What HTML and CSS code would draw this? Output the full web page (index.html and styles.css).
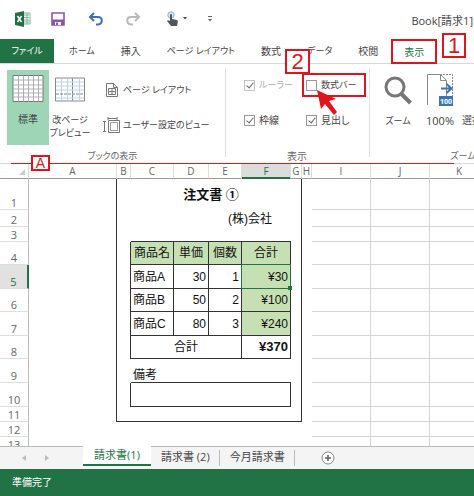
FILE: index.html
```html
<!DOCTYPE html>
<html lang="ja">
<head>
<meta charset="utf-8">
<title>Book[請求1]</title>
<link rel="stylesheet" href="styles.css">
</head>
<body>
<div class="app">
  <header class="titlebar">
    <div class="quick">
      <svg class="q-excel" width="16" height="16" viewBox="0 0 16 16"><path d="M8 2h7v11H8z" fill="#fff" stroke="#7fb497"/><path d="M9 4h5M9 6.500h5M9 9h5M9 11h5M12 2v11" stroke="#7fb497"/><path d="M0 2l9-2v16l-9-2z" fill="#1e7145"/><path d="M2.500 5l4 6M6.500 5l-4 6" stroke="#fff" stroke-width="1.500"/></svg>
      <button class="q-save" aria-label="上書き保存"><svg width="14" height="14" viewBox="0 0 14 14"><path d="M1 1h12v12H1z" fill="#fff" stroke="#8a55b0" stroke-width="1.600"/><path d="M1 7.500h12V13H1z" fill="#8a55b0"/><path d="M4 10h6v3H4z" fill="#fff"/><path d="M5 10.500h2V13H5z" fill="#8a55b0"/></svg></button>
      <button class="q-undo" aria-label="元に戻す"><svg width="16" height="14" viewBox="0 0 16 14"><path d="M6 1L2 5l4 4M2.500 5H10c5 0 5 7 0 7.500H8" fill="none" stroke="#3f6fb0" stroke-width="2"/></svg></button>
      <button class="q-redo" aria-label="やり直し"><svg width="16" height="14" viewBox="0 0 16 14"><path d="M10 1l4 4-4 4M13.500 5H6c-5 0-5 7 0 7.500h2" fill="none" stroke="#b9b9b9" stroke-width="2"/></svg></button>
      <button class="q-touch" aria-label="タッチ"><svg width="22" height="16" viewBox="0 0 22 16"><circle cx="5" cy="4" r="3.200" fill="#dbe8f5" stroke="#89aed4"/><path d="M4 3.500q1-1 2 0V8l5 1q1 .5 .8 2L11 15H5L1 10q.5-1.300 3 0z" fill="#555"/><path d="M17 6h4l-2 2.500z" fill="#444"/></svg></button>
      <button class="q-more" aria-label="カスタマイズ"><svg width="6" height="8" viewBox="0 0 6 8"><path d="M1 1.500h4" stroke="#666"/><path d="M1 4h4L3 6.500z" fill="#666"/></svg></button>
    </div>
    <div class="book">Book[請求1]</div>
  </header>

  <nav class="tabs">
    <button class="tab kana file">ファイル</button>
    <button class="tab kana">ホーム</button>
    <button class="tab">挿入</button>
    <button class="tab kana">ページ レイアウト</button>
    <button class="tab">数式</button>
    <button class="tab kana">データ</button>
    <button class="tab">校閲</button>
    <button class="tab current">表示</button>
  </nav>

  <section class="ribbon">
    <div class="group views">
      <div class="tools">
        <button class="big on">
          <svg width="32" height="28" viewBox="0 0 32 28"><path d="M1 1h30v26H1z" fill="#fff" stroke="#777"/><path d="M1 5.500h30M1 10.500h30M1 14.500h30M1 18.500h30M1 22.500h30M6.500 1v26M11.500 1v26M16.500 1v26M21.500 1v26M26.500 1v26" stroke="#b0aeb5"/></svg>
          <span>標準</span>
        </button>
        <button class="big kana">
          <svg width="32" height="28" viewBox="0 0 32 28"><path d="M1.500 3.500h29v23h-29z" fill="#fff" stroke="#888"/><path d="M2 7.500h28M2 11.500h28M2 15.500h28M2 23.500h28M7.500 4v22M13.500 4v22M25.500 4v22" stroke="#bfd3e8"/><path d="M18.500 4v22M2 19.500h28" stroke="#6688aa" stroke-dasharray="3 1"/></svg>
          <span>改ページ<br>プレビュー</span>
        </button>
        <div class="stack kana">
          <button class="small"><svg width="18" height="16" viewBox="0 0 18 16"><path d="M3.500 1.500h7l4 4v9h-11zM10.500 1.500v4h4" fill="#fff" stroke="#777"/><path d="M5.500 6.500h7v6h-7zM9 6.500v6M5.500 9.500h7" fill="none" stroke="#777"/></svg>ページ レイアウト</button>
          <button class="small"><svg width="18" height="16" viewBox="0 0 18 16"><path d="M5.500 3.500h11v12h-11z" fill="#fff" stroke="#777"/><path d="M7.500 5.500h7v8h-7z" fill="#fff" stroke="#999"/><path d="M5 1.500h9M5 0v3M14 0v3M1.500 4v10M0 4.500h3M0 14.500h3" stroke="#777"/></svg>ユーザー設定のビュー</button>
        </div>
      </div>
      <div class="caption kana">ブックの表示</div>
    </div>
    <div class="group show">
      <div class="tools checks">
        <label class="check kana muted"><input type="checkbox" checked disabled>ルーラー</label>
        <label class="check kana marked"><input type="checkbox">数式バー
          <svg class="pointer" width="24" height="26" viewBox="0 0 24 26"><path d="M0 0l19 9-7 2 8 11-3 3-9-11-4 5z" fill="#e0141c"/></svg>
        </label>
        <label class="check"><input type="checkbox" checked>枠線</label>
        <label class="check"><input type="checkbox" checked>見出し</label>
      </div>
      <div class="caption">表示</div>
    </div>
    <div class="group zoom">
      <div class="tools">
        <button class="big kana">
          <svg width="30" height="32" viewBox="0 0 30 32"><circle cx="12" cy="13" r="9" fill="#fff" stroke="#777" stroke-width="3"/><path d="M18.500 20l9 9" stroke="#777" stroke-width="4"/></svg>
          <span>ズーム</span>
        </button>
        <button class="big">
          <svg width="28" height="34" viewBox="0 0 28 34"><path d="M14 1.500h12.500v30H1" fill="none" stroke="#888" stroke-dasharray="2 1"/><path d="M1.500 32V1.500h13l6 6V32" fill="#fff" stroke="#888"/><path d="M14.500 1.500v6h6" fill="none" stroke="#888"/><path d="M15 15.500h10M20.500 11l5 4.500-5 4.500" fill="none" stroke="#3b74b5" stroke-width="2"/><path d="M13 23h14v10H13z" fill="#3b74b5"/><text x="20" y="31" class="badge">100</text></svg>
          <span>100%</span>
        </button>
        <button class="big"><svg width="30" height="34"></svg><span>選択範囲</span></button>
      </div>
      <div class="caption kana">ズーム</div>
    </div>
  </section>

  <main class="sheet">
    <table class="grid">
      <colgroup><col class="w-n"><col class="w-a"><col class="w-b"><col class="w-c"><col class="w-d"><col class="w-e"><col class="w-f"><col class="w-g"><col class="w-h"><col class="w-i"><col class="w-i"><col class="w-i"></colgroup>
      <thead>
        <tr><th class="corner"><svg width="8" height="8" viewBox="0 0 8 8"><path d="M7 1v6H1z" fill="#ccc"/></svg></th><th>A</th><th>B</th><th>C</th><th>D</th><th>E</th><th class="sel">F</th><th>G</th><th>H</th><th>I</th><th>J</th><th>K</th></tr>
      </thead>
      <tbody>
        <tr class="h31"><th>1</th><td class="r"></td><td></td><td colspan="4" class="title">注文書 ①</td><td class="r"></td><td></td><td class="g"></td><td class="g"></td><td class="g"></td></tr>
        <tr class="h17"><th>2</th><td class="r"></td><td></td><td></td><td></td><td colspan="2" class="company">(株)会社</td><td class="r"></td><td></td><td class="g"></td><td class="g"></td><td class="g"></td></tr>
        <tr class="h15"><th>3</th><td class="r"></td><td></td><td class="b"></td><td class="b"></td><td class="b"></td><td class="b"></td><td class="r"></td><td></td><td class="g"></td><td class="g"></td><td class="g"></td></tr>
        <tr class="h23"><th>4</th><td class="r"></td><td class="r"></td><td class="r b fill mid">商品名</td><td class="r b fill mid">単価</td><td class="r b fill mid">個数</td><td class="r b fill mid">合計</td><td class="r"></td><td></td><td class="g"></td><td class="g"></td><td class="g"></td></tr>
        <tr class="h24"><th class="sel">5</th><td class="r"></td><td class="r"></td><td class="r b">商品A</td><td class="r b num">30</td><td class="r b num">1</td><td class="r b fill num active">¥30</td><td class="r"></td><td></td><td class="g"></td><td class="g"></td><td class="g"></td></tr>
        <tr class="h23"><th>6</th><td class="r"></td><td class="r"></td><td class="r b">商品B</td><td class="r b num">50</td><td class="r b num">2</td><td class="r b fill num">¥100</td><td class="r"></td><td></td><td class="g"></td><td class="g"></td><td class="g"></td></tr>
        <tr class="h24"><th>7</th><td class="r"></td><td class="r"></td><td class="r b">商品C</td><td class="r b num">80</td><td class="r b num">3</td><td class="r b fill num">¥240</td><td class="r"></td><td></td><td class="g"></td><td class="g"></td><td class="g"></td></tr>
        <tr class="h23"><th>8</th><td class="r"></td><td class="r"></td><td colspan="3" class="r b mid">合計</td><td class="r b num total">¥370</td><td class="r"></td><td></td><td class="g"></td><td class="g"></td><td class="g"></td></tr>
        <tr class="h24"><th>9</th><td class="r"></td><td></td><td class="b low">備考</td><td class="b"></td><td class="b"></td><td class="b"></td><td class="r"></td><td></td><td class="g"></td><td class="g"></td><td class="g"></td></tr>
        <tr class="h24"><th>10</th><td class="r"></td><td class="r"></td><td colspan="4" class="r b"></td><td class="r"></td><td></td><td class="g"></td><td class="g"></td><td class="g"></td></tr>
        <tr class="h15"><th>11</th><td class="r"></td><td class="b"></td><td class="b"></td><td class="b"></td><td class="b"></td><td class="b"></td><td class="r b"></td><td></td><td class="g"></td><td class="g"></td><td class="g"></td></tr>
        <tr class="h15"><th>12</th><td></td><td></td><td></td><td></td><td></td><td></td><td></td><td></td><td class="g"></td><td class="g"></td><td class="g"></td></tr>
        <tr class="h15"><th>13</th><td></td><td></td><td></td><td></td><td></td><td></td><td></td><td></td><td class="g"></td><td class="g"></td><td class="g"></td></tr>
      </tbody>
    </table>
  </main>

  <nav class="sheets">
    <div class="arrows"><button aria-label="前へ"><svg width="6" height="8" viewBox="0 0 6 8"><path d="M5 1v6L1 4z" fill="#bbb"/></svg></button><button aria-label="次へ"><svg width="6" height="8" viewBox="0 0 6 8"><path d="M1 1v6l4-3z" fill="#bbb"/></svg></button></div>
    <button class="sheet-tab open">請求書(1)</button>
    <button class="sheet-tab">請求書 (2)</button>
    <button class="sheet-tab">今月請求書</button>
    <button class="add" aria-label="新しいシート"><svg width="14" height="14" viewBox="0 0 14 14"><circle cx="7" cy="7" r="6" fill="#fff" stroke="#888"/><path d="M7 4v6M4 7h6" stroke="#666" stroke-width="1.600"/></svg></button>
  </nav>
  <footer class="status">準備完了</footer>

  <div class="mark one">1</div>
  <div class="mark two">2</div>
  <div class="rule"></div>
  <div class="mark letter">A</div>
</div>
</body>
</html>
```
FILE: styles.css
```css
* { box-sizing: border-box; }
body { margin: 0; background: #fff; }
.app {
  position: relative;
  display: flex;
  flex-direction: column;
  height: 100vh;
  overflow: hidden;
  color: #444;
  font: 10px/14px "Open Sans", "Noto Sans CJK JP", sans-serif;
  font-feature-settings: "palt";
}
button { margin: 0; padding: 0; border: 0; background: none; color: inherit; font: inherit; font-feature-settings: inherit; white-space: nowrap; }
svg { display: block; flex: none; }
.kana { font-size: 9px; }

.titlebar { display: flex; justify-content: space-between; flex: none; height: 39px; padding: 0 1px 0 15px; }
.quick { display: flex; align-items: center; height: 38px; }
.q-save { margin-left: 20px; }
.q-undo { margin-left: 23px; }
.q-redo { margin-left: 21px; }
.q-touch { margin-left: 25px; }
.q-more { margin-left: 19px; }
.book { font-size: 11px; line-height: 42px; white-space: nowrap; }

.tabs { display: flex; flex: none; height: 25px; border-bottom: 1px solid #d8d8d8; }
.tab { padding: 0 13px; }
.file { width: 54px; margin-right: 2px; padding: 0; background: #217346; color: #fff; }
.current { border: 2px solid #e0141c; width: 46px; margin-bottom: -1px; padding: 0; color: #217346; }

.ribbon { display: flex; flex: none; height: 100px; border-bottom: 1px solid #d8d8d8; }
.group { display: flex; flex-direction: column; flex: none; position: relative; }
.group + .group::before { content: ""; position: absolute; left: 0; top: 4px; bottom: 6px; border-left: 1px solid #e0e0e0; }
.views { width: 225px; }
.show { width: 144px; }
.zoom { width: 188px; }
.tools { display: flex; flex: 1; padding: 6px 7px 0; }
.caption { height: 14px; text-align: center; color: #666; }
.big { display: flex; flex-direction: column; align-items: center; gap: 10px; width: 42px; height: 75px; padding-top: 4px; }
.big span { line-height: 13px; }
.on { background: #9fd5b7; }
.views .big svg { height: 29px; }
.stack { display: flex; flex-direction: column; gap: 19px; padding: 12px 0 0 12px; }
.small { display: flex; align-items: center; gap: 2px; height: 16px; }

.checks { display: grid; grid-template-columns: 58px 64px; grid-template-rows: 24px 24px; row-gap: 11px; padding: 9px 0 0 19px; }
.check { position: relative; display: flex; align-items: center; gap: 4px; padding-left: 4px; white-space: nowrap; }
.check:first-child, .check:nth-child(3) { padding-left: 0; }
.check input { appearance: none; display: grid; place-items: center; width: 11px; height: 11px; margin: 0; border: 1px solid #999; background: #fff; }
.check input:checked::after { content: ""; width: 3px; height: 6px; margin-bottom: 2px; border: solid #666; border-width: 0 1px 1px 0; transform: rotate(40deg); }
.muted { color: #aaa; }
.muted input { border-color: #c4c4c4; }
.marked::before { content: ""; position: absolute; inset: 0; border: 2px solid #e0141c; }
.pointer { position: absolute; left: 15px; top: 17px; }
.zoom .tools { padding-left: 8px; }
.zoom .big { gap: 7px; padding-top: 3px; }
.zoom .big svg { height: 34px; }
.zoom .big:nth-child(2) span { font-size: 11px; }
.badge { font: bold 7px "Open Sans", sans-serif; fill: #fff; text-anchor: middle; }

.sheet { flex: 1; min-height: 0; overflow: hidden; }
.grid { width: 488px; table-layout: fixed; border-collapse: separate; border-spacing: 0; color: #111; font: 12px/14px "Liberation Sans", "Noto Sans CJK JP", sans-serif; }
.w-n { width: 29px; } .w-a { width: 88px; } .w-b { width: 14px; } .w-c { width: 43px; }
.w-d { width: 35px; } .w-e { width: 33px; } .w-f { width: 49px; } .w-g { width: 11px; }
.w-h { width: 10px; } .w-i { width: 59px; }
.grid th { padding: 0; border: solid #ddd; border-width: 0 1px 1px 0; color: #666; font: 11px/13px "Open Sans", sans-serif; text-align: center; vertical-align: bottom; }
.grid thead th { height: 15px; border-bottom-color: #999; font-size: 10px; line-height: 14px; }
.grid tbody th { border-right-color: #bbb; }
.grid .corner svg { margin: 0 0 2px 18px; }
.grid thead .sel { background: #dcdcdc; color: #217346; box-shadow: inset 0 -1px #217346; border-bottom-color: #217346; }
.grid tbody .sel { background: #e1e1e1; color: #217346; border-right: 2px solid #217346; }
.grid td { padding: 0 2px; white-space: nowrap; vertical-align: middle; }
.grid .g { border: solid #d4d4d4; border-width: 0 1px 1px 0; }
.grid .r { border-right: 1px solid #333; }
.grid .b { border-bottom: 1px solid #333; }
.h31 { height: 31px; } .h24 { height: 24px; } .h23 { height: 23px; } .h17 { height: 17px; } .h15 { height: 15px; }
.grid .fill { background: #c6e0b4; }
.grid .mid { text-align: center; }
.grid .num { text-align: right; }
.grid .title { text-align: center; font-weight: bold; font-size: 13px; }
.grid .company { padding-right: 19px; text-align: right; }
.grid .low { vertical-align: bottom; }
.grid .total { font-weight: bold; font-size: 13px; }
.active { position: relative; }
.active::before { content: ""; position: absolute; inset: -1px; border: 1px solid #217346; }
.active::after { content: ""; position: absolute; right: -2px; bottom: -2px; width: 4px; height: 4px; background: #217346; }

.sheets { display: flex; flex: none; height: 23px; border-top: 1px solid #bbb; background: #f4f4f4; font-size: 11px; }
.arrows { display: flex; align-items: center; gap: 17px; width: 83px; padding-left: 21px; }
.sheet-tab { position: relative; height: 20px; padding: 0 10px; }
.sheet-tab + .sheet-tab:not(.open)::after { content: ""; position: absolute; right: 0; top: 3px; height: 16px; border-right: 1px solid #bbb; }
.open { margin-top: -1px; width: 68px; padding: 0; border-bottom: 2px solid #217346; background: #fff; color: #217346; }
.add { margin-left: 26px; }
.status { flex: none; height: 27px; padding-left: 12px; background: #217346; color: #fff; line-height: 26px; }

.mark { position: absolute; display: grid; place-items: center; border: 2px solid #e0141c; background: #fff; color: #e0141c; font-family: "Liberation Sans", sans-serif; }
.one { left: 442px; top: 33px; width: 24px; height: 25px; font-size: 22px; }
.two { left: 285px; top: 49px; width: 25px; height: 25px; font-size: 22px; }
.letter { left: 31px; top: 155px; width: 19px; height: 16px; font-size: 14px; line-height: 12px; }
.rule { position: absolute; left: 11px; top: 163px; width: 443px; border-top: 1px solid #e0141c; }
```
